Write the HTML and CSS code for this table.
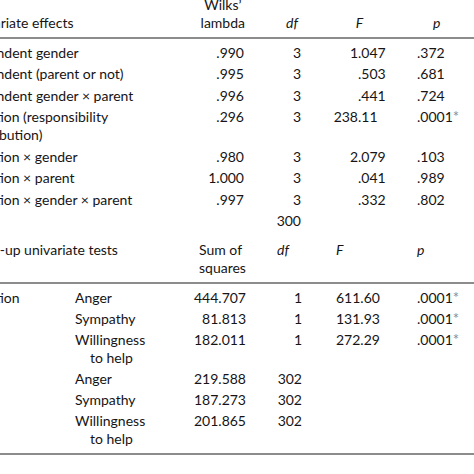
FILE: index.html
```html
<!DOCTYPE html>
<html lang="en">
<head>
<meta charset="utf-8">
<title>MANOVA table</title>
<link rel="stylesheet" href="styles.css">
</head>
<body>
<div class="page">
  <div class="frame">
    <table class="tbl tbl-multi">
      <colgroup>
        <col class="c-label1"><col class="c-lambda"><col class="c-df1"><col class="c-fint"><col class="c-ffrac"><col class="c-p1">
      </colgroup>
      <thead>
        <tr>
          <th class="lbl mv-h">Multivariate effects</th>
          <th class="num"><span class="stack">Wilks’<br>lambda</span></th>
          <th class="num df-h ital">df</th>
          <th class="ctr ital" colspan="2">F</th>
          <th class="p-h ital"><span class="p-mark">p</span></th>
        </tr>
      </thead>
      <tbody>
        <tr><td class="lbl">Respondent gender</td><td class="num lam">.990</td><td class="num dfv">3</td><td class="num fi">1</td><td class="ff">.047</td><td>.372</td></tr>
        <tr><td class="lbl">Respondent (parent or not)</td><td class="num lam">.995</td><td class="num dfv">3</td><td class="num fi"></td><td class="ff">.503</td><td>.681</td></tr>
        <tr><td class="lbl">Respondent gender × parent</td><td class="num lam">.996</td><td class="num dfv">3</td><td class="num fi"></td><td class="ff">.441</td><td>.724</td></tr>
        <tr><td class="lbl">Condition (responsibility attribution)</td><td class="num lam">.296</td><td class="num dfv">3</td><td class="num fi">238</td><td class="ff">.11</td><td>.0001<span class="star">*</span></td></tr>
        <tr><td class="lbl">Condition × gender</td><td class="num lam">.980</td><td class="num dfv">3</td><td class="num fi">2</td><td class="ff">.079</td><td>.103</td></tr>
        <tr><td class="lbl">Condition × parent</td><td class="num lam">1.000</td><td class="num dfv">3</td><td class="num fi"></td><td class="ff">.041</td><td>.989</td></tr>
        <tr><td class="lbl">Condition × gender × parent</td><td class="num lam">.997</td><td class="num dfv">3</td><td class="num fi"></td><td class="ff">.332</td><td>.802</td></tr>
        <tr><td class="lbl"></td><td></td><td class="num dfv">300</td><td></td><td></td><td></td></tr>
      </tbody>
    </table>

    <table class="tbl tbl-uni">
      <colgroup>
        <col class="c-label2"><col class="c-sub"><col class="c-ss"><col class="c-df2"><col class="c-f2"><col class="c-p2">
      </colgroup>
      <thead>
        <tr>
          <th class="lbl" colspan="2">Follow-up univariate tests</th>
          <th class="ss-h">Sum of<br>squares</th>
          <th class="df2-h ital">df</th>
          <th class="f2 ital">F</th>
          <th class="ital">p</th>
        </tr>
      </thead>
      <tbody>
        <tr><td class="lbl">Condition</td><td class="sub">Anger</td><td class="num">444.707</td><td class="num">1</td><td class="f2">611.60</td><td>.0001<span class="star">*</span></td></tr>
        <tr><td class="lbl"></td><td class="sub">Sympathy</td><td class="num">81.813</td><td class="num">1</td><td class="f2">131.93</td><td>.0001<span class="star">*</span></td></tr>
        <tr><td class="lbl"></td><td class="sub">Willingness to help</td><td class="num">182.011</td><td class="num">1</td><td class="f2">272.29</td><td>.0001<span class="star">*</span></td></tr>
        <tr><td class="lbl">Error</td><td class="sub">Anger</td><td class="num">219.588</td><td class="num">302</td><td class="f2"></td><td></td></tr>
        <tr><td class="lbl"></td><td class="sub">Sympathy</td><td class="num">187.273</td><td class="num">302</td><td class="f2"></td><td></td></tr>
        <tr><td class="lbl"></td><td class="sub">Willingness to help</td><td class="num">201.865</td><td class="num">302</td><td class="f2"></td><td></td></tr>
      </tbody>
    </table>
  </div>
</div>
</body>
</html>
```

FILE: styles.css
```css
html, body {
  margin: 0;
  padding: 0;
  background: #ffffff;
}

.page {
  width: 474px;
  height: 474px;
  overflow: hidden;
  font-family: "Lato", "Open Sans", sans-serif;
  font-size: 14px;
  line-height: 18px;
  color: #161415;
}

.frame {
  margin-left: -41px;
  margin-top: -6px;
  width: 515px;
}

.tbl {
  width: 515px;
  table-layout: fixed;
  border-collapse: collapse;
  border-spacing: 0;
}

.tbl th,
.tbl td {
  padding: 1.78px 0;
  text-align: left;
  vertical-align: top;
  font-weight: 400;
  white-space: nowrap;
}

.tbl th {
  border-bottom: 2px solid #8c8c8c;
  padding-bottom: 5px;
}

.tbl td.lbl,
.tbl td.sub {
  white-space: normal;
  padding-left: 15px;
  text-indent: -15px;
}

.tbl .num { text-align: right; }
.tbl .ctr { text-align: center; }
.ital { font-style: italic; }

/* multivariate block */
.c-label1 { width: 191px; }
.c-lambda { width: 96px; }
.c-df1 { width: 56px; }
.c-fint { width: 56px; }
.c-ffrac { width: 59px; }
.c-p1 { width: 57px; }

.tbl-multi th { vertical-align: bottom; }
.tbl-multi .mv-h { text-indent: -5px; }
.tbl-multi .stack {
  display: inline-block;
  text-align: center;
  margin-right: 1px;
}
.tbl-multi .df-h { padding-right: 4px; }
.p-mark {
  display: inline-block;
  margin-left: 16px;
}
.tbl-multi td.lam { padding-right: 2px; }
.tbl-multi td.dfv { padding-right: 1px; }
.tbl-multi tbody tr:first-child td { padding-top: 5px; }

/* univariate block */
.tbl-uni { margin-top: 7px; }
.c-label2 { width: 116px; }
.c-sub { width: 80px; }
.c-ss { width: 91px; }
.c-df2 { width: 56px; }
.c-f2 { width: 115px; }
.c-p2 { width: 57px; }

.tbl-uni .ss-h { padding-left: 44px; }
.tbl-uni .df2-h { padding-left: 31px; }
.tbl-uni .f2 { padding-left: 34px; }
.tbl-uni td { padding-top: 1.5px; padding-bottom: 1.5px; }
.tbl-uni tbody tr:first-child td { padding-top: 5px; }
.tbl-uni tbody tr:last-child td {
  padding-bottom: 5px;
  border-bottom: 2px solid #8c8c8c;
}

.star {
  color: #8a8a8a;
  font-size: 15px;
  line-height: 0;
}
```
